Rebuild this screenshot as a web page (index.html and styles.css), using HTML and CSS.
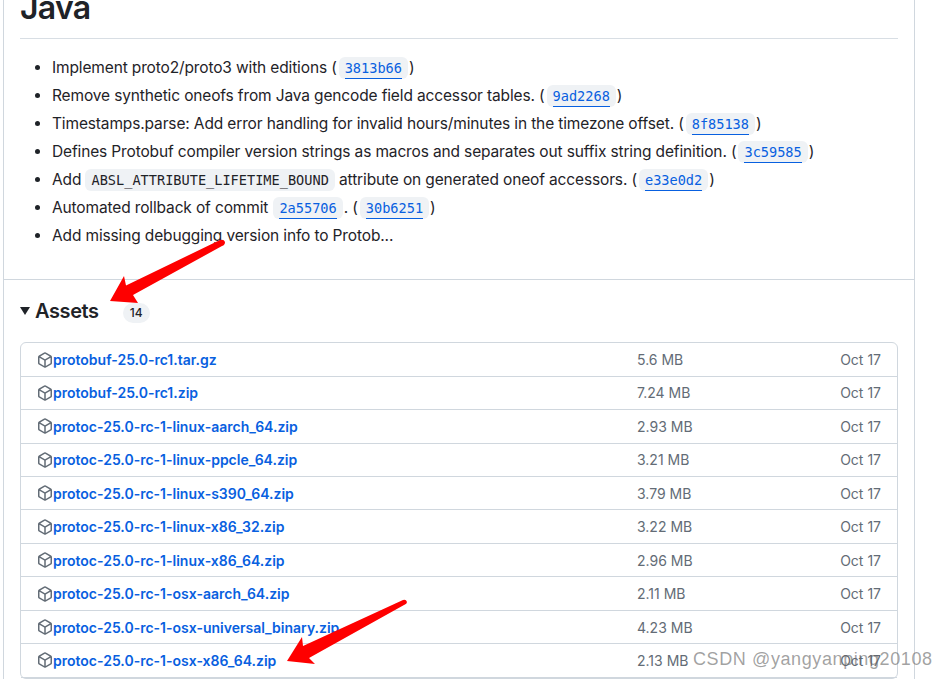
FILE: index.html
```html
<!DOCTYPE html>
<html lang="en">
<head>
  <meta charset="UTF-8" />
  <title>Release assets</title>
  <link rel="stylesheet" href="styles.css">
</head>
<body>

  <svg class="icon-defs" xmlns="http://www.w3.org/2000/svg">
    <symbol id="package" viewBox="0 0 16 16">
      <path d="m8.878.392 5.25 3.045c.54.314.872.89.872 1.514v6.098a1.75 1.75 0 0 1-.872 1.514l-5.25 3.045a1.75 1.75 0 0 1-1.756 0l-5.25-3.045A1.75 1.75 0 0 1 1 11.049V4.951c0-.624.332-1.201.872-1.514L7.122.392a1.75 1.75 0 0 1 1.756 0ZM7.875 1.69l-4.63 2.685L8 7.133l4.755-2.758-4.63-2.685a.248.248 0 0 0-.25 0ZM2.5 5.677v5.372c0 .09.047.171.125.216l4.625 2.683V8.432Zm6.25 8.271 4.625-2.683a.25.25 0 0 0 .125-.216V5.677L8.75 8.432Z"></path>
    </symbol>
  </svg>

  <div class="release">
    <div class="notes">
      <h2 class="title">Java</h2>
      <ul class="changes">
        <li>Implement proto2/proto3 with editions (<a class="commit"><span>3813b66</span></a>)</li>
        <li>Remove synthetic oneofs from Java gencode field accessor tables. (<a class="commit"><span>9ad2268</span></a>)</li>
        <li>Timestamps.parse: Add error handling for invalid hours/minutes in the timezone offset. (<a class="commit"><span>8f85138</span></a>)</li>
        <li>Defines Protobuf compiler version strings as macros and separates out suffix string definition. (<a class="commit"><span>3c59585</span></a>)</li>
        <li>Add <code class="chip">ABSL_ATTRIBUTE_LIFETIME_BOUND</code> attribute on generated oneof accessors. (<a class="commit"><span>e33e0d2</span></a>)</li>
        <li>Automated rollback of commit <a class="commit mid"><span>2a55706</span></a>. (<a class="commit"><span>30b6251</span></a>)</li>
        <li>Add missing debugging version info to Protob...</li>
      </ul>
    </div>

    <div class="assets">
      <div class="assets-head">
        <span class="caret"></span>
        <h3>Assets</h3>
        <span class="counter">14</span>
      </div>
      <div class="asset-list">
        <div class="asset"><a class="asset-name"><svg class="pkg"><use href="#package"></use></svg>protobuf-25.0-rc1.tar.gz</a><span class="size">5.6 MB</span><span class="date">Oct 17</span></div>
        <div class="asset"><a class="asset-name"><svg class="pkg"><use href="#package"></use></svg>protobuf-25.0-rc1.zip</a><span class="size">7.24 MB</span><span class="date">Oct 17</span></div>
        <div class="asset"><a class="asset-name"><svg class="pkg"><use href="#package"></use></svg>protoc-25.0-rc-1-linux-aarch_64.zip</a><span class="size">2.93 MB</span><span class="date">Oct 17</span></div>
        <div class="asset"><a class="asset-name"><svg class="pkg"><use href="#package"></use></svg>protoc-25.0-rc-1-linux-ppcle_64.zip</a><span class="size">3.21 MB</span><span class="date">Oct 17</span></div>
        <div class="asset"><a class="asset-name"><svg class="pkg"><use href="#package"></use></svg>protoc-25.0-rc-1-linux-s390_64.zip</a><span class="size">3.79 MB</span><span class="date">Oct 17</span></div>
        <div class="asset"><a class="asset-name"><svg class="pkg"><use href="#package"></use></svg>protoc-25.0-rc-1-linux-x86_32.zip</a><span class="size">3.22 MB</span><span class="date">Oct 17</span></div>
        <div class="asset"><a class="asset-name"><svg class="pkg"><use href="#package"></use></svg>protoc-25.0-rc-1-linux-x86_64.zip</a><span class="size">2.96 MB</span><span class="date">Oct 17</span></div>
        <div class="asset"><a class="asset-name"><svg class="pkg"><use href="#package"></use></svg>protoc-25.0-rc-1-osx-aarch_64.zip</a><span class="size">2.11 MB</span><span class="date">Oct 17</span></div>
        <div class="asset"><a class="asset-name"><svg class="pkg"><use href="#package"></use></svg>protoc-25.0-rc-1-osx-universal_binary.zip</a><span class="size">4.23 MB</span><span class="date">Oct 17</span></div>
        <div class="asset"><a class="asset-name"><svg class="pkg"><use href="#package"></use></svg>protoc-25.0-rc-1-osx-x86_64.zip</a><span class="size">2.13 MB</span><span class="date">Oct 17</span></div>
      </div>
    </div>
  </div>

  <!-- annotations drawn on top of the screenshot -->
  <svg class="arrows" xmlns="http://www.w3.org/2000/svg" width="947" height="679" viewBox="0 0 947 679">
    <path d="M110 301 L124 276 L126 285.5 L220 240 Q224 239 225 242 Q225 245 222 246 L133 295 L138 303 Z"></path>
    <path d="M287 661 L302 637 L303 646 L403 600 Q406 599 407 602 Q407 604 404 605 L309 658 L315 664 Z"></path>
  </svg>
  <div class="watermark">CSDN @yangyanping20108</div>

</body>
</html>
```

FILE: styles.css
```css
* {
  box-sizing: border-box;
}
html, body {
  margin: 0;
  height: 679px;
  overflow: hidden;
}
body {
  position: relative;
  background: #fff;
  color: #1f2328;
  font-family: Inter, "Noto Sans", sans-serif;
  font-size: 15.5px;
  letter-spacing: -0.14px;
}
.icon-defs {
  display: none;
}
.release {
  width: 912px;
  margin: -16px 0 0 3px;
  border-left: 1px solid #d0d7de;
  border-right: 1px solid #d0d7de;
}
.notes {
  padding: 0 16px;
  height: 296px;
  border-bottom: 1px solid #d0d7de;
}
.title {
  margin: 0;
  height: 55px;
  padding-top: 4px;
  font-size: 32px;
  line-height: 40px;
  font-weight: 600;
  letter-spacing: -0.7px;
  border-bottom: 1px solid #d8dee4;
}
.changes {
  margin: 17px 0 0;
  padding-left: 32px;
}
.changes li {
  height: 24px;
  line-height: 24px;
  margin-bottom: 4px;
  white-space: nowrap;
}
.commit {
  display: inline-block;
  height: 22px;
  line-height: 22px;
  margin: 0 1px 0 2px;
  padding: 0 6px;
  background: #eff2f5;
  border-radius: 6px;
  font-family: "DejaVu Sans Mono", monospace;
  font-size: 13.6px;
  letter-spacing: 0;
  color: #0860e0;
}
.commit.mid {
  margin-left: 1px;
}
.commit span {
  display: inline-block;
  border-bottom: 1px solid #0860e0;
  line-height: 20px;
}
.chip {
  display: inline-block;
  height: 22px;
  line-height: 22px;
  padding: 0 6px;
  background: #eff2f5;
  border-radius: 6px;
  font-family: "DejaVu Sans Mono", monospace;
  font-size: 13.6px;
  letter-spacing: 0;
}
.assets {
  padding: 0 16px;
}
.assets-head {
  display: flex;
  align-items: center;
  height: 62.3px;
}
.caret {
  width: 0;
  height: 0;
  margin-right: 5px;
  border-left: 5px solid transparent;
  border-right: 5px solid transparent;
  border-top: 8px solid #1f2328;
}
.assets-head h3 {
  margin: 0 24px 0 0;
  font-size: 20px;
  font-weight: 600;
  letter-spacing: -0.4px;
}
.counter {
  width: 27px;
  height: 20px;
  margin-top: 4px;
  line-height: 20px;
  text-align: center;
  font-size: 12px;
  font-weight: 500;
  letter-spacing: 0;
  background: #eff2f5;
  border-radius: 10px;
}
.asset-list {
  border: 1px solid #d0d7de;
  border-radius: 6px;
}
.asset {
  display: flex;
  align-items: center;
  height: 33.44px;
  padding: 0 16px;
  font-size: 14px;
  letter-spacing: 0;
  border-bottom: 1px solid #d0d7de;
}
.asset-name {
  display: flex;
  align-items: center;
  width: 600px;
  font-weight: 600;
  color: #0860e0;
}
.pkg {
  width: 16px;
  height: 16px;
  fill: #636c76;
}
.size {
  color: #636c76;
}
.date {
  margin-left: auto;
  color: #636c76;
}
.arrows {
  position: absolute;
  left: 0;
  top: 0;
}
.arrows path {
  fill: #fe0000;
}
.watermark {
  position: absolute;
  left: 693px;
  top: 648px;
  font-family: "Liberation Sans", sans-serif;
  font-size: 18px;
  line-height: 22px;
  letter-spacing: 0.6px;
  color: rgba(100, 100, 100, 0.6);
  white-space: nowrap;
}
```
